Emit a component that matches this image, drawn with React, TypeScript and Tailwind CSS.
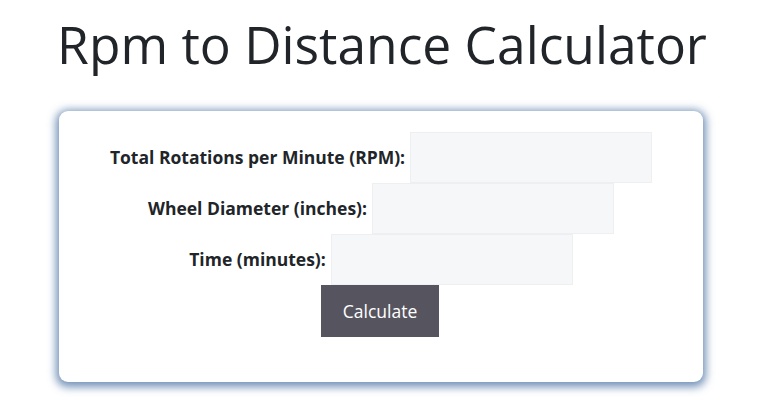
import React from "react";

function Row({ label }: { label: string }) {
  return (
    <div className="flex items-center justify-center">
      <label className="text-[17.5px] font-bold text-[#212529] mr-[5px]">{label}</label>
      <input
        type="text"
        className="w-[242px] h-[51px] bg-[#f6f7f8] border border-[#eeeff0] outline-none"
      />
    </div>
  );
}

export default function App() {
  return (
    <div className="w-[768px] h-[415px] bg-white overflow-hidden" style={{ fontFamily: '"Open Sans", "Noto Sans", sans-serif' }}>
      <h1 className="text-center text-[51.5px] leading-none font-normal text-[#212529] pt-[19px] h-[111px] -ml-[4px]">
        Rpm to Distance Calculator
      </h1>
      <div className="mx-[59px] w-[644px] h-[271px] bg-white rounded-[9px] shadow-[0_2px_9px_3px_rgba(70,110,160,0.75)] pt-[21px] flex flex-col items-stretch">
        <div className="flex flex-col">
          <Row label="Total Rotations per Minute (RPM):" />
          <Row label="Wheel Diameter (inches):" />
          <Row label="Time (minutes):" />
          <div className="flex justify-center">
            <button className="w-[118px] h-[52px] bg-[#56555f] text-white text-[17.5px] -ml-[2px]">Calculate</button>
          </div>
        </div>
      </div>
    </div>
  );
}
